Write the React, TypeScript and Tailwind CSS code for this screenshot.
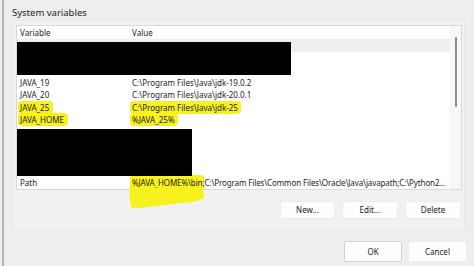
import React from "react";

const rows: { name: string; value: React.ReactNode; hidden?: boolean; band?: boolean }[] = [
  { name: "", value: "", hidden: true, band: true },
  { name: "", value: "", hidden: true },
  { name: "", value: "", hidden: true },
  { name: "JAVA_19", value: "C:\\Program Files\\Java\\jdk-19.0.2" },
  { name: "JAVA_20", value: "C:\\Program Files\\Java\\jdk-20.0.1" },
  {
    name: "JAVA_25",
    value: <span className="bg-[#f7f11e] rounded-[4px] -ml-[2px] pl-[2px] pr-[3px] py-[1px]">C:\Program Files\Java\jdk-25</span>,
  },
  {
    name: "JAVA_HOME",
    value: <span className="bg-[#f7f11e] rounded-[4px] -ml-[2px] pl-[2px] pr-[3px] py-[1px]">%JAVA_25%</span>,
  },
  { name: "", value: "", hidden: true },
  { name: "", value: "", hidden: true },
  { name: "", value: "", hidden: true },
  { name: "", value: "", hidden: true },
  {
    name: "Path",
    value: (
      <span className="tracking-[-0.12px]">
        <span className="bg-[#f7f11e] rounded-[3px] -ml-[2px] pl-[2px] py-[2px]">%JAVA_HOME%\bin;</span>
        {"C:\\Program Files\\Common Files\\Oracle\\Java\\javapath;C:\\Python2..."}
      </span>
    ),
  },
];

const Btn = ({ label, w, def }: { label: string; w: string; def?: boolean }) => (
  <div
    className={`${w} flex items-center justify-center bg-[#fdfdfd] rounded-[2px] border ${
      def ? "border-[#c9d3e0]" : "border-[#ececec]"
    }`}
  >
    {label}
  </div>
);

export default function App() {
  return (
    <div className="w-[474px] h-[266px] bg-[#eeeeee] overflow-hidden font-['Noto_Sans',sans-serif] text-[8px] text-[#1c1c1c] leading-none">
      <div className="ml-[2px] h-full border-l-[2px] border-[#b2b2b2] flex flex-col">
        <div className="pl-[8px] h-[20px] flex items-center pt-[6px] text-[9.5px] text-[#222]">System variables</div>

        <div className="ml-[8px] w-[453px] h-[211px] bg-[#f1f1f1] border border-[#e8e8e8] flex flex-col relative">
          <div className="ml-[3px] mt-[4px] w-[446px] h-[165px] bg-white border border-[#dadada] flex relative overflow-hidden">
            <div className="flex-1 flex flex-col overflow-hidden">
              <div className="h-[13px] shrink-0 flex items-center">
                <div className="w-[112px] pl-[3px]">Variable</div>
                <div className="pl-[3px]">Value</div>
              </div>
              {rows.map((r, i) => (
                <div key={i} className={`h-[12.5px] shrink-0 flex items-center whitespace-nowrap ${r.band ? "bg-[#efefef]" : ""}`}>
                  <div className="w-[112px] shrink-0 pl-[3px]">
                    {r.name === "JAVA_25" || r.name === "JAVA_HOME" ? (
                      <span className="bg-[#f7f11e] rounded-[4px] -ml-[2px] pl-[2px] pr-[4px] py-[1px]">{r.name}</span>
                    ) : (
                      r.name
                    )}
                  </div>
                  <div className="pl-[3px]">{r.value}</div>
                </div>
              ))}
            </div>
            <div className="w-[11px] bg-[#f7f7f7] flex justify-center pt-[11px]">
              <div className="w-[2px] h-[70px] bg-[#8c8c8c] rounded-full" />
            </div>

            {/* redactions */}
            <div className="absolute left-0 top-[16px] w-[274px] h-[33px] bg-black" />
            <div className="absolute -left-[1px] top-[103px] w-[176px] h-[47px] bg-black" />
          </div>

          {/* marker swoop under %JAVA_HOME%\bin */}
          <svg className="absolute left-[114px] top-[160px]" width="84" height="30" viewBox="0 0 84 30">
            <path d="M4 8 L74 8 L76 16 L68 19 L16 25 L6 26 L4 18 Z" fill="#f7f11e" stroke="#f7f11e" strokeWidth="3" strokeLinejoin="round" />
          </svg>

          <div className="mt-[11px] self-end mr-[3px] flex gap-[7px] h-[18px]">
            <Btn label="New..." w="w-[55px]" />
            <Btn label="Edit..." w="w-[56px]" />
            <Btn label="Delete" w="w-[56px]" />
          </div>
        </div>

        <div className="mt-[10px] self-end mr-[7px] flex gap-[6px] h-[21px]">
          <Btn label="OK" w="w-[58px]" def />
          <Btn label="Cancel" w="w-[59px]" />
        </div>
      </div>
    </div>
  );
}
